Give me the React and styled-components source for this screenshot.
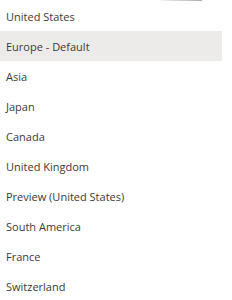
import React from "react";
import styled, { createGlobalStyle } from "styled-components";

const Global = createGlobalStyle`
  html, body { margin: 0; padding: 0; background: #fff; }
  body { font-family: "Open Sans", "Noto Sans", sans-serif; }
`;

const Page = styled.div`
  width: 232px;
  height: 300px;
  overflow: hidden;
  display: flex;
  flex-direction: column;
`;

const EdgeStrip = styled.div`
  height: 1px;
  display: flex;
`;

const EdgeMark = styled.div`
  margin-left: 161px;
  width: 41px;
  height: 1px;
  background: linear-gradient(90deg, #f0f0f0, #c8c8c8 60%, #a8a8a8);
`;

const List = styled.ul`
  list-style: none;
  margin: 0;
  padding: 0;
  width: 222px;
`;

const Item = styled.li`
  height: 30px;
  display: flex;
  align-items: center;
  padding-left: 6px;
  font-size: 11px;
  color: #3b3a39;
  background: ${(p) => (p.$selected ? "#edebe9" : "transparent")};
`;

const items = [
  "United States",
  "Europe - Default",
  "Asia",
  "Japan",
  "Canada",
  "United Kingdom",
  "Preview (United States)",
  "South America",
  "France",
  "Switzerland",
];

export default function App() {
  return (
    <Page>
      <Global />
      <EdgeStrip>
        <EdgeMark />
      </EdgeStrip>
      <List>
        {items.map((t, i) => (
          <Item key={t} $selected={i === 1}>
            {t}
          </Item>
        ))}
      </List>
    </Page>
  );
}
